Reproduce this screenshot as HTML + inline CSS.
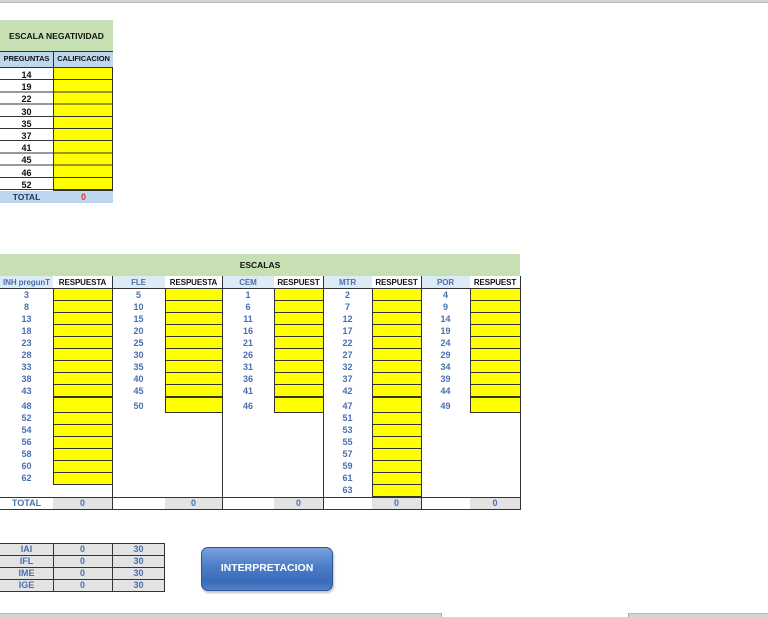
<!DOCTYPE html><html><head><meta charset="utf-8"><style>
body{margin:0;width:768px;height:617px;position:relative;overflow:hidden;background:#fff;font-family:"Liberation Sans",sans-serif}
div{position:absolute;box-sizing:border-box}
.t{font-weight:bold;font-size:9px;text-align:center;line-height:12px;white-space:nowrap}
.h{font-size:8px;letter-spacing:-0.1px}
.b{color:#4a6fb0}
.k{color:#111}
.yl{background:#ffff00 repeating-linear-gradient(to bottom,transparent 0,transparent 11px,#333 11px,#333 12px);border:1px solid #333}
.ys{background:#ffff00;border:1px solid #333;border-top:0}
.vl{width:1px;background:#333}
</style></head><body>
<div style="left:0;top:0;width:768px;height:3px;background:#d4d4d4;border-bottom:1px solid #b8b8b8"></div>

<div style="left:0;top:20px;width:113px;height:31px;background:#c6e0b4"></div>
<div class="t k" style="left:0;top:30px;width:113px;font-size:8.5px">ESCALA NEGATIVIDAD</div>
<div style="left:0;top:51px;width:113px;height:17px;background:#bdd7ee;border-top:1px solid #333;border-bottom:1px solid #333"></div>
<div style="left:53px;top:51px;width:1px;height:17px;background:#333"></div>
<div class="t k h" style="left:0;top:53px;width:53px;font-size:7.5px">PREGUNTAS</div>
<div class="t k h" style="left:54px;top:53px;width:59px;font-size:7.5px">CALIFICACION</div>
<div style="left:0;top:68px;width:54px;height:123px;background:repeating-linear-gradient(to bottom,transparent 0,transparent 11.2px,#333 11.2px,#333 12.2px)"></div>
<div class="yl" style="left:53px;top:67px;width:60px;height:124px;background:#ffff00 repeating-linear-gradient(to bottom,transparent 0,transparent 11.2px,#333 11.2px,#333 12.2px)"></div>
<div class="t k" style="left:0;top:69px;width:53px;line-height:12.2px">14<br>19<br>22<br>30<br>35<br>37<br>41<br>45<br>46<br>52</div>
<div style="left:0;top:191px;width:113px;height:12px;background:#bdd7ee"></div>
<div class="t" style="left:0;top:191px;width:53px;color:#1f3864;font-size:8.5px">TOTAL</div>
<div class="t" style="left:54px;top:191px;width:59px;color:#e03030">0</div>

<div style="left:0;top:254px;width:520px;height:22px;background:#c6e0b4"></div>
<div class="t k" style="left:0;top:259px;width:520px;font-size:8.5px">ESCALAS</div>
<div style="left:0;top:276px;width:520px;height:13px;background:#ddebf7;border-bottom:1px solid #333"></div>
<div style="left:53px;top:276px;width:59px;height:12px;background:#fff"></div>
<div style="left:165px;top:276px;width:57px;height:12px;background:#fff"></div>
<div style="left:274px;top:276px;width:49px;height:12px;background:#fff"></div>
<div style="left:372px;top:276px;width:49px;height:12px;background:#fff"></div>
<div style="left:470px;top:276px;width:50px;height:12px;background:#fff"></div>
<div class="t b h" style="left:0;top:277px;width:53px">INH pregunT</div>
<div class="t k h" style="left:53px;top:277px;width:59px">RESPUESTA</div>
<div class="t b h" style="left:112px;top:277px;width:53px">FLE</div>
<div class="t k h" style="left:165px;top:277px;width:57px">RESPUESTA</div>
<div class="t b h" style="left:222px;top:277px;width:52px">CEM</div>
<div class="t k h" style="left:274px;top:277px;width:49px">RESPUEST</div>
<div class="t b h" style="left:323px;top:277px;width:49px">MTR</div>
<div class="t k h" style="left:372px;top:277px;width:49px">RESPUEST</div>
<div class="t b h" style="left:421px;top:277px;width:49px">POR</div>
<div class="t k h" style="left:470px;top:277px;width:50px">RESPUEST</div>

<div class="yl" style="left:53px;top:288px;width:60px;height:110px"></div>
<div class="ys" style="left:53px;top:398px;width:60px;height:15px"></div>
<div class="yl" style="left:53px;top:413px;width:60px;height:72px;border-top:0"></div>
<div class="yl" style="left:165px;top:288px;width:58px;height:110px"></div>
<div class="ys" style="left:165px;top:398px;width:58px;height:15px"></div>
<div class="yl" style="left:274px;top:288px;width:50px;height:110px"></div>
<div class="ys" style="left:274px;top:398px;width:50px;height:15px"></div>
<div class="yl" style="left:372px;top:288px;width:50px;height:110px"></div>
<div class="ys" style="left:372px;top:398px;width:50px;height:15px"></div>
<div class="yl" style="left:372px;top:413px;width:50px;height:84px;border-top:0"></div>
<div class="yl" style="left:470px;top:288px;width:51px;height:110px"></div>
<div class="ys" style="left:470px;top:398px;width:51px;height:15px"></div>

<div class="vl" style="left:112px;top:276px;height:234px"></div>
<div class="vl" style="left:222px;top:276px;height:234px"></div>
<div class="vl" style="left:323px;top:276px;height:234px"></div>
<div class="vl" style="left:421px;top:276px;height:234px"></div>
<div class="vl" style="left:520px;top:276px;height:234px"></div>

<div class="t b" style="left:0;top:289px;width:53px">3<br>8<br>13<br>18<br>23<br>28<br>33<br>38<br>43</div>
<div class="t b" style="left:0;top:400px;width:53px">48</div>
<div class="t b" style="left:0;top:412px;width:53px">52<br>54<br>56<br>58<br>60<br>62</div>
<div class="t b" style="left:112px;top:289px;width:53px">5<br>10<br>15<br>20<br>25<br>30<br>35<br>40<br>45</div>
<div class="t b" style="left:112px;top:400px;width:53px">50</div>
<div class="t b" style="left:222px;top:289px;width:52px">1<br>6<br>11<br>16<br>21<br>26<br>31<br>36<br>41</div>
<div class="t b" style="left:222px;top:400px;width:52px">46</div>
<div class="t b" style="left:323px;top:289px;width:49px">2<br>7<br>12<br>17<br>22<br>27<br>32<br>37<br>42</div>
<div class="t b" style="left:323px;top:400px;width:49px">47</div>
<div class="t b" style="left:323px;top:412px;width:49px">51<br>53<br>55<br>57<br>59<br>61<br>63</div>
<div class="t b" style="left:421px;top:289px;width:49px">4<br>9<br>14<br>19<br>24<br>29<br>34<br>39<br>44</div>
<div class="t b" style="left:421px;top:400px;width:49px">49</div>

<div style="left:0;top:497px;width:521px;height:13px;border-top:1px solid #333;border-bottom:1px solid #333"></div>
<div style="left:53px;top:498px;width:59px;height:11px;background:#e3e3e3"></div>
<div style="left:165px;top:498px;width:57px;height:11px;background:#e3e3e3"></div>
<div style="left:274px;top:498px;width:49px;height:11px;background:#e3e3e3"></div>
<div style="left:372px;top:498px;width:49px;height:11px;background:#e3e3e3"></div>
<div style="left:470px;top:498px;width:50px;height:11px;background:#e3e3e3"></div>
<div class="t b" style="left:0;top:497px;width:53px">TOTAL</div>
<div class="t b" style="left:53px;top:497px;width:59px">0</div>
<div class="t b" style="left:165px;top:497px;width:57px">0</div>
<div class="t b" style="left:274px;top:497px;width:49px">0</div>
<div class="t b" style="left:372px;top:497px;width:49px">0</div>
<div class="t b" style="left:470px;top:497px;width:50px">0</div>

<div style="left:0;top:543px;width:165px;height:49px;background:#e3e3e3 repeating-linear-gradient(to bottom,transparent 0,transparent 11px,#333 11px,#333 12px);border-top:1px solid #333;border-right:1px solid #333"></div>
<div class="vl" style="left:53px;top:543px;height:49px"></div>
<div class="vl" style="left:112px;top:543px;height:49px"></div>
<div class="t b" style="left:0;top:543px;width:53px">IAI<br>IFL<br>IME<br>IGE</div>
<div class="t b" style="left:53px;top:543px;width:59px">0<br>0<br>0<br>0</div>
<div class="t b" style="left:112px;top:543px;width:53px">30<br>30<br>30<br>30</div>

<div style="left:201px;top:547px;width:132px;height:44px;border-radius:7px;border:1px solid #2f5597;background:linear-gradient(to bottom,#7aa2dc 0%,#4a7cc8 45%,#3a6bb8 80%,#5283cf 100%);box-shadow:1px 2px 2px rgba(0,0,0,.25)"></div>
<div class="t" style="left:201px;top:562px;width:132px;color:#fff;font-size:10.5px">INTERPRETACION</div>

<div style="left:0;top:613px;width:442px;height:4px;background:#d4d4d4;border-top:1px solid #bbb;border-right:1px solid #aaa"></div>
<div style="left:628px;top:613px;width:140px;height:4px;background:#d4d4d4;border-top:1px solid #bbb;border-left:1px solid #aaa"></div>
</body></html>
